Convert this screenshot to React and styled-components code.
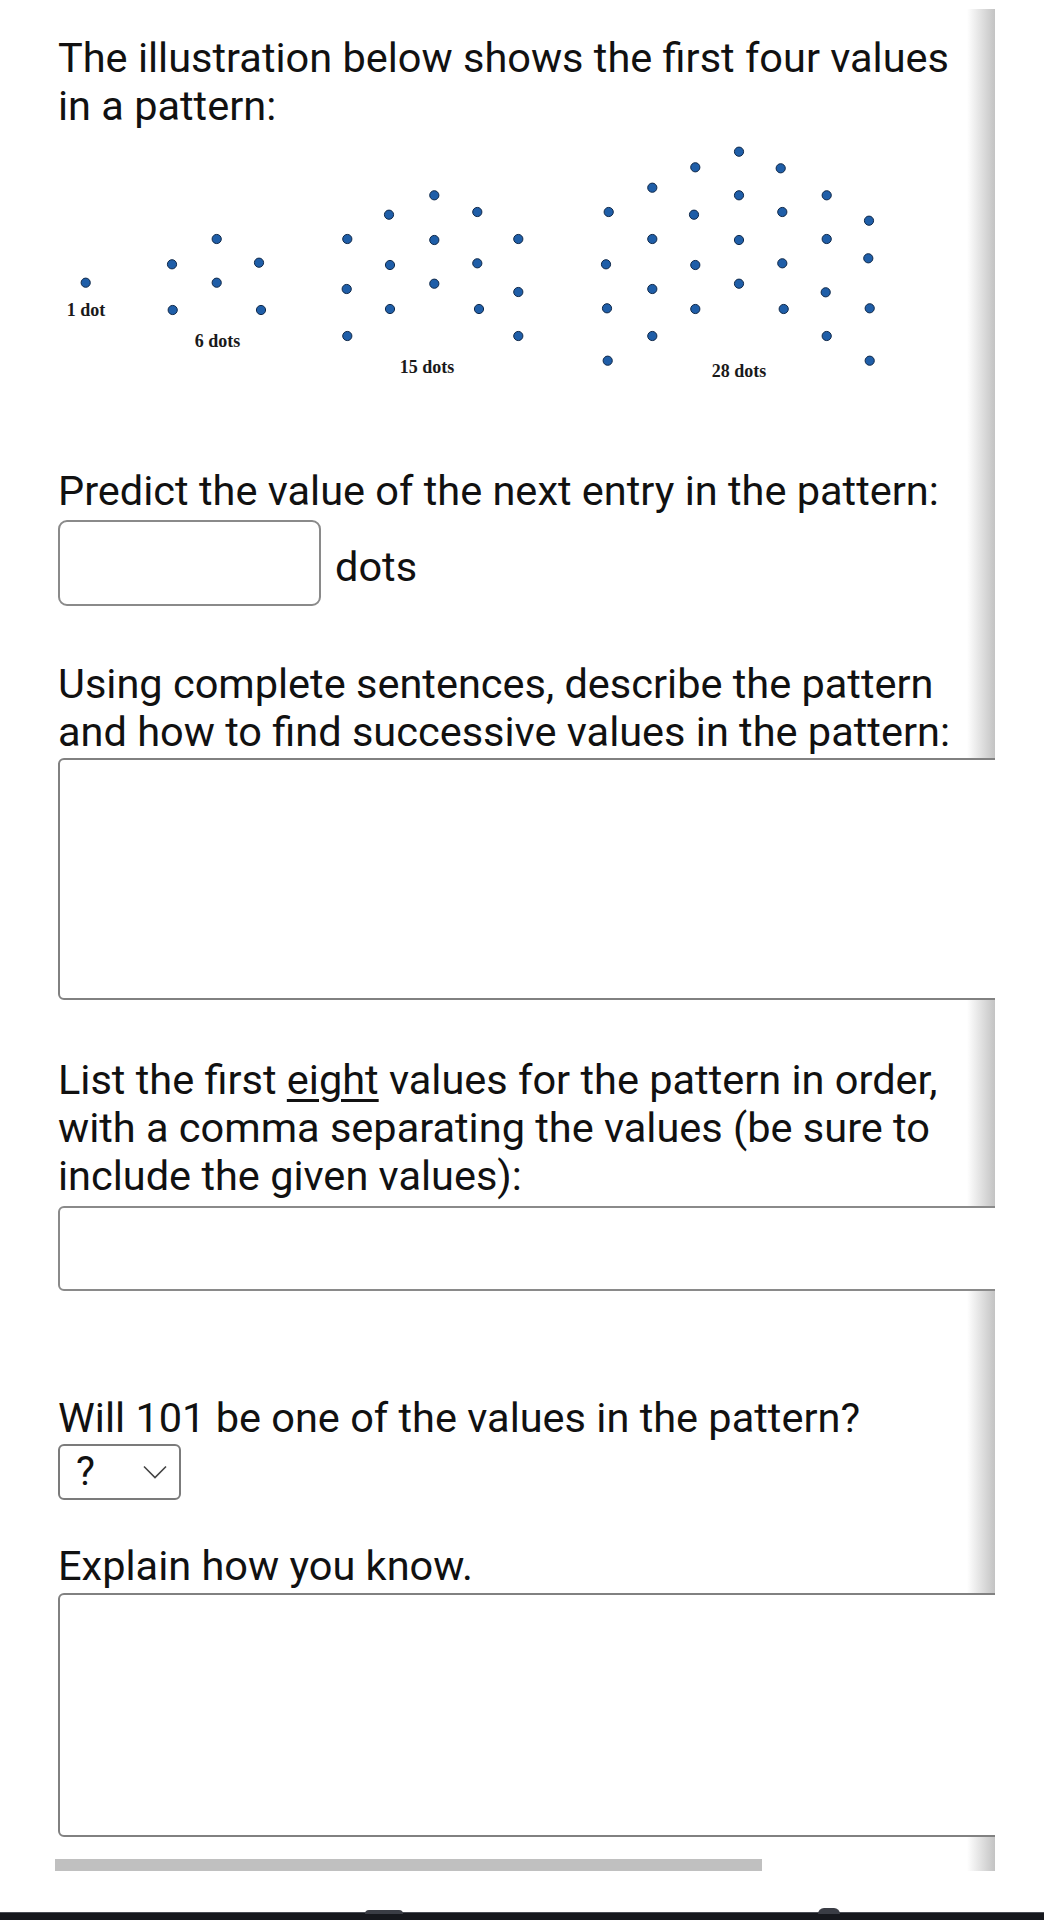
import React from "react";
import styled, { createGlobalStyle } from "styled-components";

const GlobalStyle = createGlobalStyle`
  html, body {
    margin: 0;
    padding: 0;
    background: #fff;
  }
  body {
    font-family: Roboto, "Noto Sans", sans-serif;
    color: #111;
  }
`;

// page coordinates of every dot in the picture (viewBox is offset to match)
const dots = [
  [85.7, 282.7],

  [216.7, 239], [172, 264.3], [259, 262.7], [216.7, 282.7], [172.7, 310], [261, 310],

  [434.3, 195.3], [389, 214.7], [477.3, 212], [347.3, 239], [434.3, 240], [518.3, 239],
  [390, 265], [477.3, 263.3], [346.7, 289], [434.3, 283.7], [518.3, 292], [390, 309],
  [479, 309], [347.3, 336], [518.3, 336],

  [739, 151.7], [695.3, 167.3], [780.7, 168.3], [652.3, 187.7], [739, 195.3], [826.7, 195.3],
  [608.7, 212], [694, 214.7], [782.3, 212], [869, 220.7], [652.3, 239], [739, 240],
  [826.7, 239], [606, 264.3], [695.3, 265], [782.3, 263.3], [868.3, 258.3], [652.3, 289],
  [739, 283.7], [825.7, 292.3], [607, 308.3], [695.3, 309], [783.7, 309], [869.7, 308.3],
  [652.3, 336], [826.7, 336], [607.7, 360.7], [869.7, 360.7],
];

const labels = [
  { x: 86, y: 316, text: "1 dot" },
  { x: 217.5, y: 346.5, text: "6 dots" },
  { x: 427, y: 372.5, text: "15 dots" },
  { x: 739, y: 376.5, text: "28 dots" },
];

const Screen = styled.div`
  width: 1044px;
  height: 1920px;
  display: flex;
  flex-direction: column;
  overflow: hidden;
`;

const Viewport = styled.div`
  margin-top: 9px;
  width: 995px;
  height: 1862px;
  box-sizing: border-box;
  padding: 25px 0 0 58px;
  overflow: hidden;
  display: flex;
  flex-direction: column;
  align-items: flex-start;
  background: linear-gradient(to right, #fff, #c3c3c3) right top / 28px 100% no-repeat;
`;

const Prompt = styled.p`
  margin: ${(p) => p.$mt || 0}px 0 0;
  width: 915px;
  font-size: 41.5px;
  line-height: 48px;
  font-weight: 400;
`;

const Underlined = styled.span`
  text-decoration: underline;
  text-decoration-thickness: 3px;
  text-underline-offset: 5px;
`;

const Figure = styled.svg`
  display: block;
  margin-top: 10px;
`;

const Dot = styled.circle`
  fill: #1f5ea8;
  stroke: #10294a;
  stroke-width: 1;
`;

const Caption = styled.text`
  font-family: "Liberation Serif", "DejaVu Serif", serif;
  font-size: 18px;
  font-weight: 700;
  fill: #1a1a1a;
`;

const AnswerRow = styled.div`
  display: flex;
  align-items: center;
  gap: 14px;
  margin-top: ${(p) => p.$mt || 0}px;
`;

const Unit = styled.span`
  font-size: 41.5px;
  line-height: 48px;
  margin-top: 7px;
`;

const Field = styled.input`
  box-sizing: border-box;
  display: block;
  margin: ${(p) => p.$mt || 0}px 0 0;
  width: ${(p) => p.$w}px;
  height: ${(p) => p.$h}px;
  flex-shrink: 0;
  padding: 0 12px;
  border: 2px solid #8a8a8a;
  border-radius: ${(p) => p.$r || 6}px;
  background: #fff;
  font: inherit;
  font-size: 32px;
  outline: none;
`;

const Essay = styled.textarea`
  box-sizing: border-box;
  display: block;
  margin: ${(p) => p.$mt || 0}px 0 0;
  width: 1000px;
  height: ${(p) => p.$h}px;
  flex-shrink: 0;
  padding: 10px;
  border: 2px solid #818181;
  border-radius: 6px;
  background: #fff;
  resize: none;
  font: inherit;
  outline: none;
`;

const Select = styled.div`
  box-sizing: border-box;
  margin-top: 2px;
  width: 123px;
  height: 56px;
  display: flex;
  align-items: center;
  justify-content: space-between;
  padding: 0 12px 0 16px;
  border: 2px solid #7b7b7b;
  border-radius: 6px;
  font-size: 40px;
  line-height: 1;
`;

const Thumb = styled.div`
  margin: 22px 0 0 -3px;
  width: 707px;
  height: 12px;
  flex-shrink: 0;
  background: #c0c0c0;
`;

const NavBar = styled.div`
  margin-top: auto;
  height: 7px;
  border-top: 1px solid #4a4d55;
  background: #16181d;
  position: relative;
`;

const NavKey = styled.span`
  position: absolute;
  left: ${(p) => p.$x}px;
  top: ${(p) => (p.$round ? -5 : -3)}px;
  width: ${(p) => (p.$round ? 22 : 38)}px;
  height: ${(p) => (p.$round ? 6 : 4)}px;
  border-radius: ${(p) => (p.$round ? "11px 11px 0 0" : "4px 4px 0 0")};
  background: #3a3d45;
`;

const Chevron = () => (
  <svg width="24" height="14" viewBox="0 0 24 14">
    <polyline points="1,1.5 12,12.5 23,1.5" fill="none" stroke="#444" strokeWidth="1.6" />
  </svg>
);

const App = () => (
  <>
    <GlobalStyle />
    <Screen>
      <Viewport>
        <Prompt>The illustration below shows the first four values in a pattern:</Prompt>

        <Figure width="840" height="250" viewBox="58 140 840 250">
          {dots.map(([x, y], i) => (
            <Dot key={i} cx={x} cy={y} r="4.6" />
          ))}
          {labels.map((l) => (
            <Caption key={l.text} x={l.x} y={l.y} textAnchor="middle">
              {l.text}
            </Caption>
          ))}
        </Figure>

        <Prompt $mt={77}>Predict the value of the next entry in the pattern:</Prompt>
        <AnswerRow $mt={5}>
          <Field $w={263} $h={86} $r={9} />
          <Unit>dots</Unit>
        </AnswerRow>

        <Prompt $mt={54}>
          Using complete sentences, describe the pattern and how to find successive values in the
          pattern:
        </Prompt>
        <Essay $mt={2} $h={242} />

        <Prompt $mt={56}>
          List the first <Underlined>eight</Underlined> values for the pattern in order, with a comma
          separating the values (be sure to include the given values):
        </Prompt>
        <Field $mt={6} $w={1000} $h={85} />

        <Prompt $mt={103}>Will 101 be one of the values in the pattern?</Prompt>
        <Select>
          <span>?</span>
          <Chevron />
        </Select>

        <Prompt $mt={42}>Explain how you know.</Prompt>
        <Essay $mt={3} $h={244} />

        <Thumb />
      </Viewport>

      <NavBar>
        <NavKey $x={365} />
        <NavKey $x={818} $round />
      </NavBar>
    </Screen>
  </>
);

export default App;
